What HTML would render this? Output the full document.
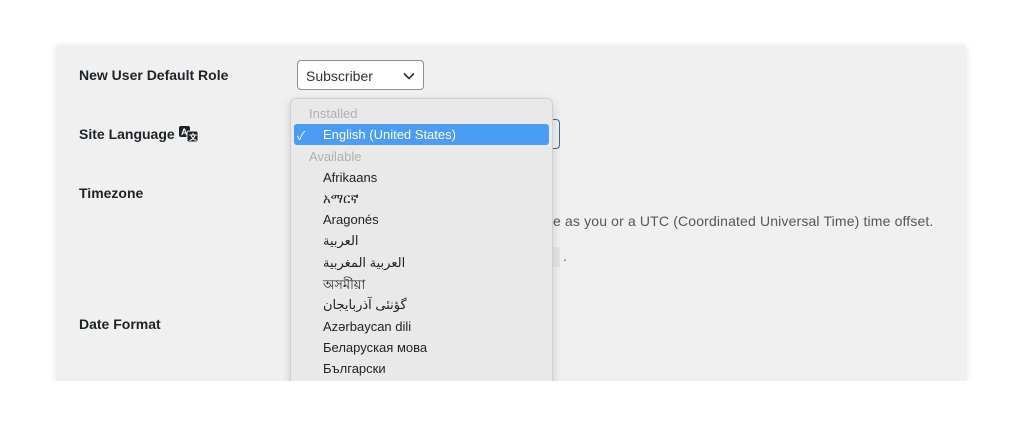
<!DOCTYPE html>
<html><head><meta charset="utf-8"><style>
body{margin:0;width:1024px;height:433px;background:#fff;position:relative;overflow:hidden;font-family:"Liberation Sans","Noto Sans CJK SC","DejaVu Sans",sans-serif;}
.panel{position:absolute;left:57px;top:45px;width:908px;height:336px;background:#f0f0f1;box-shadow:0 2px 8px rgba(0,0,0,.15);}
.lbl{position:absolute;left:79px;font-size:14px;font-weight:bold;color:#1d2327;}
.sel{position:absolute;left:297px;top:60px;width:127px;height:30px;border:1px solid #8c8f94;border-radius:4px;background:#fff;font-size:14px;color:#2c3338;box-sizing:border-box;padding:7px 0 0 8px;}
.sel svg{position:absolute;right:8px;top:11px}
.lang{position:absolute;left:540px;top:119px;width:20px;height:30px;border:1px solid #2271b1;border-left:none;border-radius:0 4px 4px 0;box-sizing:border-box;}
.desc{position:absolute;left:553px;top:213px;font-size:14px;color:#50575e;letter-spacing:0.15px;}
.code{position:absolute;left:549px;top:247px;width:11px;height:20px;background:#e5e5e5;}
.dot{position:absolute;left:563px;top:248px;font-size:14px;color:#50575e;}
.dd{position:absolute;left:290px;top:98px;width:263px;height:290px;background:#e9e9e9;border:1px solid #d0d0d0;border-radius:6px;box-sizing:border-box;box-shadow:0 3px 10px rgba(0,0,0,.15);}
.it{position:absolute;left:32px;font-size:13px;color:#222;white-space:nowrap;}
.g{color:#b0b0b0;left:18px}
.hl{position:absolute;left:3px;top:25px;width:255px;height:21px;background:#4a9cf5;border-radius:3px;}
</style></head><body>
<div class="panel"></div>
<div class="lbl" style="top:67px">New User Default Role</div>
<div class="lbl" style="top:125px">Site Language <svg width="20" height="18" viewBox="0 0 20 18" style="vertical-align:-4px"><rect x="0" y="1" width="11" height="11" rx="2" fill="#1d2327"/><text x="2" y="10" font-size="9" fill="#fff" font-weight="bold">A</text><rect x="8" y="6" width="11" height="11" rx="2" fill="#1d2327" stroke="#f0f0f1"/><text x="10" y="15" font-size="8" fill="#fff">文</text></svg></div>
<div class="lbl" style="top:185px">Timezone</div>
<div class="lbl" style="top:316px">Date Format</div>
<div class="sel">Subscriber<svg width="12" height="8" viewBox="0 0 12 8"><path d="M1 1.5l5 5 5-5" fill="none" stroke="#2c3338" stroke-width="1.6"/></svg></div>
<div class="lang"></div>
<div class="desc">e as you or a UTC (Coordinated Universal Time) time offset.</div>
<div class="code"></div><div class="dot">.</div>
<div class="dd">
<div class="hl"></div>
<div class="it" style="top:28px;left:6px;color:#fff;font-size:12px">✓</div>
<div class="it g" style="top:7px">Installed</div>
<div class="it" style="top:28px;color:#fff">English (United States)</div>
<div class="it g" style="top:50px">Available</div>
<div class="it" style="top:71px">Afrikaans</div>
<div class="it" style="top:92px">አማርኛ</div>
<div class="it" style="top:113px">Aragonés</div>
<div class="it" style="top:134px">العربية</div>
<div class="it" style="top:156px">العربية المغربية</div>
<div class="it" style="top:177px">অসমীয়া</div>
<div class="it" style="top:198px">گؤنئی آذربایجان</div>
<div class="it" style="top:220px">Azərbaycan dili</div>
<div class="it" style="top:241px">Беларуская мова</div>
<div class="it" style="top:262px">Български</div>
</div>
<div style="position:absolute;left:0;top:381px;width:1024px;height:52px;background:#fff"></div>
</body></html>
